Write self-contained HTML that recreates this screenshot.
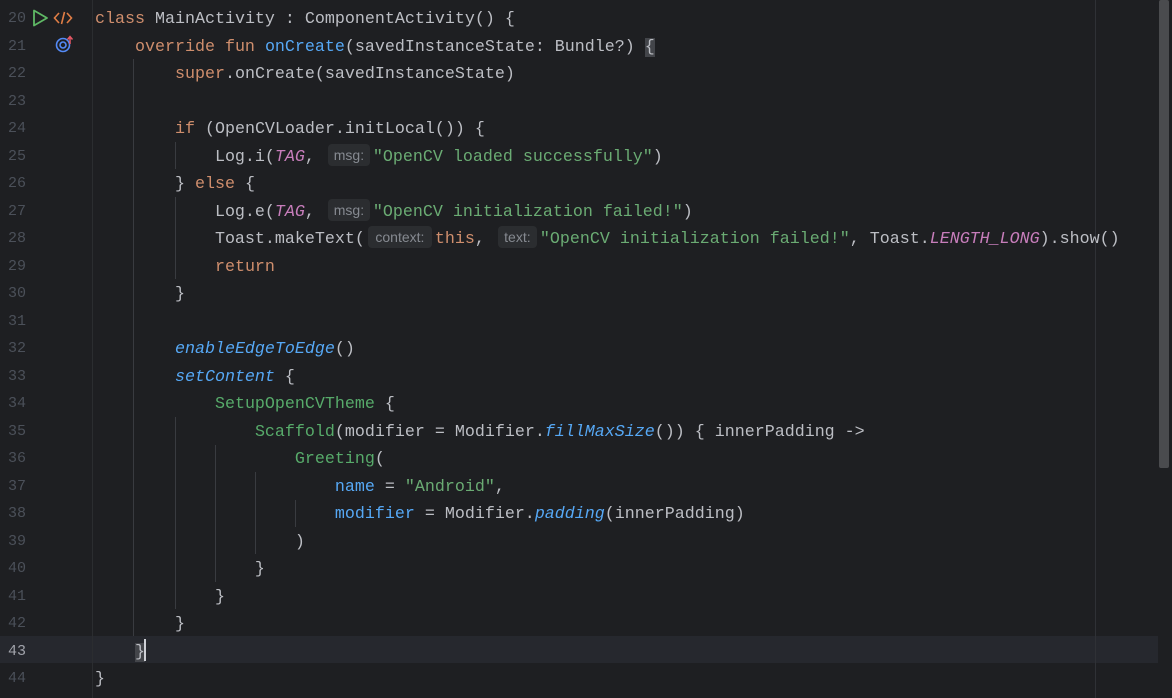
<!DOCTYPE html>
<html><head><meta charset="utf-8"><style>
html,body{margin:0;padding:0;background:#1e1f22;width:1172px;height:698px;overflow:hidden;position:relative}
.ln{position:absolute;left:0;width:26px;text-align:right;font:15px "Liberation Mono",monospace;color:#4b5059;height:27.5px;line-height:27.5px;margin-top:1px}
.c{position:absolute;left:95px;height:27.5px;line-height:27.5px;font:16.67px "Liberation Mono",monospace;color:#bcbec4;white-space:pre;margin-top:6px}
.k{color:#cf8e6d}.f{color:#56a8f5}.s{color:#6aab73}.t{color:#c77dbb;font-style:italic}.i{font-style:italic;color:#56a8f5}.g{color:#56a8f5}
.h{display:inline-block;font:14px "Liberation Sans",sans-serif;color:#868a91;background:#2b2d30;border-radius:4px;height:22px;line-height:22px;text-align:center;margin:0 3px;vertical-align:top;position:relative;top:-4px}
.gd{position:absolute;width:1px;background:#393b40}
.cur{position:absolute;left:0;width:1158px;top:635.5px;height:27.5px;background:#26282e}
</style></head><body>
<div class="cur"></div>
<div style="position:absolute;left:92px;top:0;width:1px;height:698px;background:#2b2d30"></div>
<div style="position:absolute;left:1095px;top:0;width:1px;height:698px;background:#2f3136"></div>
<div style="position:absolute;left:1159px;top:0;width:10px;height:468px;background:#4a4b4e;border-radius:2px"></div>
<div class="gd" style="left:133px;top:59px;height:577px"></div>
<div class="gd" style="left:175px;top:142px;height:27px"></div>
<div class="gd" style="left:175px;top:197px;height:82px"></div>
<div class="gd" style="left:175px;top:417px;height:192px"></div>
<div class="gd" style="left:215px;top:445px;height:137px"></div>
<div class="gd" style="left:255px;top:472px;height:82px"></div>
<div class="gd" style="left:295px;top:500px;height:27px"></div>
<svg style="position:absolute;left:32px;top:9px" width="18" height="18" viewBox="0 0 18 18"><path d="M2 1.5 L15 9 L2 16.5 Z" fill="none" stroke="#5fb865" stroke-width="1.8" stroke-linejoin="round"/></svg>
<svg style="position:absolute;left:53px;top:10px" width="20" height="16" viewBox="0 0 20 16"><path d="M6 3 L1.5 8 L6 13 M14 3 L18.5 8 L14 13 M11.5 2 L8.5 14" fill="none" stroke="#e07d45" stroke-width="1.6"/></svg>
<svg style="position:absolute;left:55px;top:35px" width="20" height="18" viewBox="0 0 20 18"><circle cx="8" cy="10" r="6.5" fill="none" stroke="#548af7" stroke-width="1.6"/><circle cx="8" cy="10" r="3" fill="none" stroke="#548af7" stroke-width="1.6"/><path d="M15 9 V2 M12.5 4.5 L15 1.5 L17.5 4.5" fill="none" stroke="#e55765" stroke-width="1.5"/></svg>
<div class="ln" style="top:4px">20</div><div class="ln" style="top:31.5px">21</div><div class="ln" style="top:59px">22</div><div class="ln" style="top:86.5px">23</div><div class="ln" style="top:114px">24</div><div class="ln" style="top:141.5px">25</div><div class="ln" style="top:169px">26</div><div class="ln" style="top:196.5px">27</div><div class="ln" style="top:224px">28</div><div class="ln" style="top:251.5px">29</div><div class="ln" style="top:279px">30</div><div class="ln" style="top:306.5px">31</div><div class="ln" style="top:334px">32</div><div class="ln" style="top:361.5px">33</div><div class="ln" style="top:389px">34</div><div class="ln" style="top:416.5px">35</div><div class="ln" style="top:444px">36</div><div class="ln" style="top:471.5px">37</div><div class="ln" style="top:499px">38</div><div class="ln" style="top:526.5px">39</div><div class="ln" style="top:554px">40</div><div class="ln" style="top:581.5px">41</div><div class="ln" style="top:609px">42</div><div class="ln" style="top:636.5px;color:#a1a3ab">43</div><div class="ln" style="top:664px">44</div>
<div class="c" style="top:4px"><span class="k">class</span> MainActivity : ComponentActivity() {</div>
<div class="c" style="top:31.5px">    <span class="k">override fun</span> <span class="f">onCreate</span>(savedInstanceState: Bundle?) <span style="background:#43454a">{</span></div>
<div class="c" style="top:59px">        <span class="k">super</span>.onCreate(savedInstanceState)</div>
<div class="c" style="top:114px">        <span class="k">if</span> (OpenCVLoader.initLocal()) {</div>
<div class="c" style="top:141.5px">            Log.i(<span class="t">TAG</span>, <span class="h" style="width:42px">msg:</span><span class="s">"OpenCV loaded successfully"</span>)</div>
<div class="c" style="top:169px">        } <span class="k">else</span> {</div>
<div class="c" style="top:196.5px">            Log.e(<span class="t">TAG</span>, <span class="h" style="width:42px">msg:</span><span class="s">"OpenCV initialization failed!"</span>)</div>
<div class="c" style="top:224px">            Toast.makeText(<span class="h" style="width:64px">context:</span><span class="k">this</span>, <span class="h" style="width:39px">text:</span><span class="s">"OpenCV initialization failed!"</span>, Toast.<span class="t">LENGTH_LONG</span>).show()</div>
<div class="c" style="top:251.5px">            <span class="k">return</span></div>
<div class="c" style="top:279px">        }</div>
<div class="c" style="top:334px">        <span class="i">enableEdgeToEdge</span>()</div>
<div class="c" style="top:361.5px">        <span class="i">setContent</span> {</div>
<div class="c" style="top:389px">            <span style="color:#57aa6a">SetupOpenCVTheme</span> {</div>
<div class="c" style="top:416.5px">                <span style="color:#57aa6a">Scaffold</span>(modifier = Modifier.<span class="i">fillMaxSize</span>()) { innerPadding -&gt;</div>
<div class="c" style="top:444px">                    <span style="color:#57aa6a">Greeting</span>(</div>
<div class="c" style="top:471.5px">                        <span class="g">name</span> = <span class="s">"Android"</span>,</div>
<div class="c" style="top:499px">                        <span class="g">modifier</span> = Modifier.<span class="i">padding</span>(innerPadding)</div>
<div class="c" style="top:526.5px">                    )</div>
<div class="c" style="top:554px">                }</div>
<div class="c" style="top:581.5px">            }</div>
<div class="c" style="top:609px">        }</div>
<div class="c" style="top:636.5px">    <span style="background:#43454a">}</span></div>
<div style="position:absolute;left:144px;top:639px;width:2px;height:22px;background:#ced0d6"></div>
<div class="c" style="top:664px">}</div>
</body></html>
